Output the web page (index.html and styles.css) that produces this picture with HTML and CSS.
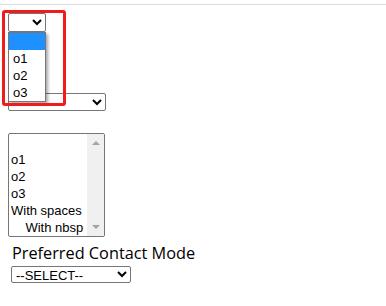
FILE: index.html
```html
<!DOCTYPE html>
<html lang="en">
<head>
<meta charset="UTF-8" />
<meta name="viewport" content="width=device-width, initial-scale=1" />
<title>Select test</title>
<link rel="stylesheet" href="styles.css">
</head>
<body>
<div class="topline"></div>

<div class="page">
  <div class="dropdown-wrap">
    <select class="sel sel-small">
      <option></option>
      <option>o1</option>
      <option>o2</option>
      <option>o3</option>
    </select>
    <ul class="popup">
      <li class="selected">&nbsp;</li>
      <li>o1</li>
      <li>o2</li>
      <li>o3</li>
    </ul>
    <div class="highlight"></div>
  </div>

  <select class="sel sel-wide">
    <option></option>
    <option>o1</option>
    <option>o2</option>
    <option>o3</option>
    <option>With spaces</option>
    <option>&nbsp;&nbsp;&nbsp;&nbsp;With nbsp</option>
  </select>

  <div class="listbox">
    <ul class="listbox-items">
      <li>&nbsp;</li>
      <li>o1</li>
      <li>o2</li>
      <li>o3</li>
      <li>With spaces</li>
      <li>&nbsp;&nbsp;&nbsp;&nbsp;With nbsp</li>
    </ul>
    <div class="scrollbar">
      <span class="arrow arrow-up"></span>
      <span class="arrow arrow-down"></span>
    </div>
  </div>

  <div class="contact">
    <label class="contact-label">Preferred Contact Mode</label>
    <select class="sel sel-contact">
      <option>--SELECT--</option>
      <option>Email</option>
      <option>Phone</option>
    </select>
  </div>
</div>
</body>
</html>
```

FILE: styles.css
```css
* {
  margin: 0;
  padding: 0;
  box-sizing: border-box;
}
body {
  background: #fff;
  color: #000;
  font-family: 'Liberation Sans', Arial, sans-serif;
  font-size: 13px;
}
.topline {
  margin-top: 4px;
  height: 1px;
  background: #dcdcdc;
}
.page {
  display: flex;
  flex-direction: column;
  align-items: flex-start;
  padding-left: 8px;
}

.sel {
  font-family: 'Liberation Sans', Arial, sans-serif;
  font-size: 13px;
  color: #000;
  background: #fff;
  border: 1px solid #767676;
  border-radius: 2px;
}
.sel-small {
  width: 38px;
  height: 19px;
}
.sel-wide {
  width: 98px;
  height: 18px;
  margin-top: 61px;
}
.sel-contact {
  width: 120px;
  height: 17px;
  margin-left: 3px;
}

.dropdown-wrap {
  position: relative;
  margin-top: 8px;
}
.popup {
  position: absolute;
  left: 0;
  top: 19px;
  width: 38px;
  list-style: none;
  background: #fff;
  border: 1px solid #767676;
  box-shadow: 2px 2px 3px rgba(0, 0, 0, 0.35);
  z-index: 2;
}
.popup li {
  height: 17px;
  line-height: 17px;
  padding-left: 4px;
}
.popup li.selected {
  background: #1e90ff;
  color: #fff;
}
.highlight {
  position: absolute;
  left: -6px;
  top: -3px;
  width: 64px;
  height: 96px;
  border: 3px solid #f01c1c;
  border-radius: 3px;
  z-index: 3;
}

.listbox {
  display: flex;
  width: 97px;
  height: 104px;
  margin-top: 22px;
  border: 1px solid #767676;
  border-radius: 2px;
  overflow: hidden;
}
.listbox-items {
  flex: 1;
  list-style: none;
  white-space: nowrap;
}
.listbox-items li {
  height: 17px;
  line-height: 17px;
  padding: 0 2px;
}
.scrollbar {
  width: 17px;
  background: #f0f0f0;
  display: flex;
  flex-direction: column;
  justify-content: space-between;
  align-items: center;
  padding: 7px 0;
}
.arrow {
  width: 0;
  height: 0;
  border-left: 4px solid transparent;
  border-right: 4px solid transparent;
}
.arrow-up {
  border-bottom: 4px solid #a3a3a3;
}
.arrow-down {
  border-top: 4px solid #a3a3a3;
}

.contact {
  display: flex;
  flex-direction: column;
  align-items: flex-start;
  margin-top: 4px;
}
.contact-label {
  font-family: 'Open Sans', sans-serif;
  font-size: 16.3px;
  padding-left: 4px;
  line-height: 25px;
}
```
